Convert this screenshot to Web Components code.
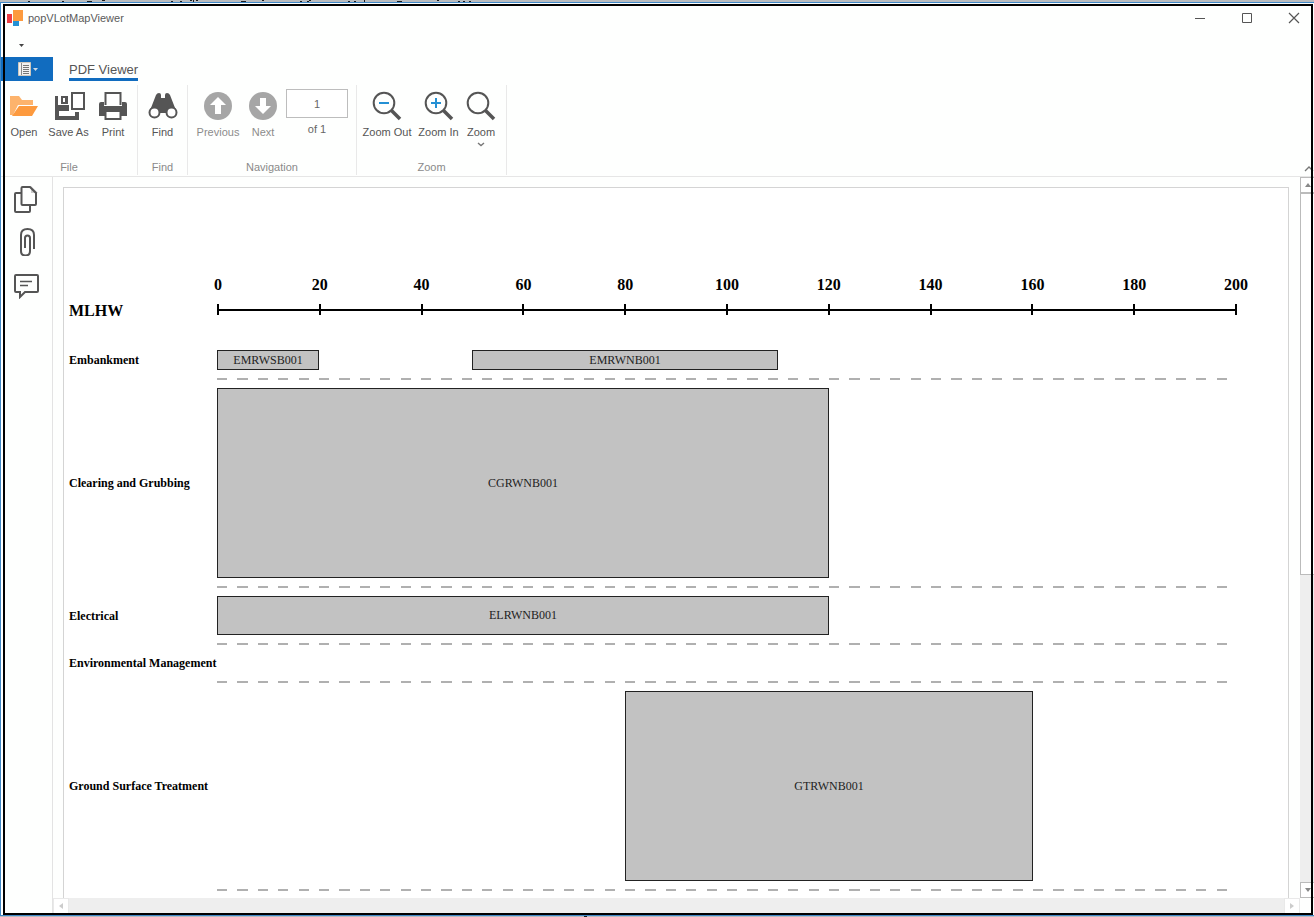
<!DOCTYPE html>
<html lang="en">
<head>
<meta charset="utf-8">
<title>popVLotMapViewer</title>
<style>
    html, body { height: 100%; margin: 0; }
    body {
        background: #b9bcbf;
        font-family: "Liberation Sans", Arial, sans-serif;
        font-size: 11px;
        color: #5a5a5a;
    }
</style>
</head>
<body>

<lot-window></lot-window>

<template id="t-window">
    <style>
        :host {
            display: flex; flex-direction: column;
            position: relative;
            height: 100vh; box-sizing: border-box;
            overflow: hidden;
        }
        /* sliver of the window underneath */
        .behind { flex: none; height: 2px; overflow: hidden; }
        .behind svg, .foot svg { display: block; }
        .shell {
            flex: 1; min-height: 0;
            display: flex; flex-direction: column;
            background: #fefffe;
            border: 1px solid #3f87c6; border-right: 0;
        }
        .foot { flex: none; height: 1px; background: #b9bcbf; display: flex; justify-content: center; }
        .foot svg { margin-right: 144px; }
        .main { flex: 1; min-height: 0; display: flex; }
        /* heavy outline lies over the whole window */
        .frame {
            position: absolute; inset: 4px 1px 2px 3px;
            border: 2px solid #000; pointer-events: none;
        }
    </style>
    <div class="behind">
        <svg width="480" height="2" stroke="#1c1c1c" fill="none">
            <path d="M28 1.500h2M62 1.500h2M87 1.500h5M171 1.500h2M180 1.500h2M241 1.500h5M300 1.500h2M307 1.500h2M348 1.500h2M354 1.500h2M397 1.500h5M458 1.500h2M463 1.500h2M469 1.500h2"/>
            <path d="M102 .5h3M190 .5h2M196 .5h2M262 .5h2M309 .5h2M437 .5h2M193.500 0v2M364.500 0v2"/>
        </svg>
    </div>
    <div class="shell">
        <title-bar>popVLotMapViewer</title-bar>
        <ribbon-tabs>PDF Viewer</ribbon-tabs>
        <tool-ribbon></tool-ribbon>
        <div class="main">
            <side-panel></side-panel>
            <doc-view><lot-map></lot-map></doc-view>
        </div>
    </div>
    <div class="foot"><svg width="3" height="1"><path d="M0 .5h3" stroke="#1c1c1c"/></svg></div>
    <div class="frame"></div>
</template>

<template id="t-title">
    <style>
        :host { display: block; flex: none; }
        .row { display: flex; align-items: center; height: 30px; padding: 0 12px 0 6px; }
        .logo { margin-right: 4px; }
        .name { flex: 1; line-height: 16px; }
        .quick { height: 24px; padding-left: 12px; display: flex; align-items: center; }
        .wins { display: flex; gap: 30px; }
        button { border: 0; padding: 0; background: none; display: flex; align-items: center; justify-content: center; width: 17px; height: 16px; color: #555; }
    </style>
    <div class="row">
        <svg class="logo" width="17" height="17" viewBox="0 0 17 17">
            <rect x="0" y="4" width="5" height="9" fill="#ee3d45"/>
            <rect x="6" y="0" width="10" height="11" fill="#fd9a3e"/>
            <rect x="6" y="11" width="6" height="5" fill="#2490d4"/>
        </svg>
        <span class="name"><slot></slot></span>
        <div class="wins">
            <button aria-label="Minimize"><svg width="12" height="12" stroke="currentColor"><path d="M1 6.500h10"/></svg></button>
            <button aria-label="Maximize"><svg width="12" height="12" fill="none" stroke="currentColor"><path d="M1.500 1.500h9v9h-9z"/></svg></button>
            <button aria-label="Close"><svg width="12" height="12" fill="none" stroke="currentColor" stroke-width="1.200"><path d="M1 1l10 10M11 1L1 11"/></svg></button>
        </div>
    </div>
    <div class="quick">
        <button aria-label="Customize quick access"><svg width="7" height="4"><path d="M1 1h5L3.500 4z" fill="#444"/></svg></button>
    </div>
</template>

<template id="t-tabs">
    <style>
        :host { display: flex; flex: none; height: 24px; }
        .app { border: 0; padding: 0 0 0 2px; width: 52px; background: #116cbf; display: flex; align-items: center; justify-content: center; gap: 2px; }
        .tab {
            margin-left: 16px; box-sizing: border-box;
            border: 0; border-bottom: 3px solid #116cbf; padding: 5px 0 0; background: none;
            font: inherit; font-size: 13px; line-height: 16px; color: #555;
        }
    </style>
    <button class="app" aria-label="Application menu">
        <svg width="13" height="14" viewBox="0 0 13 14">
            <path d="M.5.5h12v13H.5z" fill="#f2f2f2" stroke="#cfc8bd"/>
            <path d="M3.500 1v12" stroke="#8a8a8a"/>
            <path d="M5 3.500h6M5 5.500h6M5 7.500h6M5 9.500h6M5 11.500h6" stroke="#777"/>
        </svg>
        <svg width="5" height="3"><path d="M0 0h5L2.500 3z" fill="#cbd9e6"/></svg>
    </button>
    <button class="tab"><slot></slot></button>
</template>

<template id="t-group">
    <style>
        :host { display: flex; flex-direction: column; border-right: 1px solid #e9e9e9; box-sizing: border-box; margin: 4px 0 1px; }
        .items { flex: 1; display: flex; }
        .cap { text-align: center; line-height: 16px; color: #8a8a8a; }
    </style>
    <div class="items"><slot></slot></div>
    <div class="cap"></div>
</template>

<template id="t-tool">
    <style>
        :host { display: block; }
        button {
            display: flex; flex-direction: column; align-items: center;
            border: 0; margin: 0; padding: 6px 0 0; background: none;
            width: 100%; font: inherit; color: #555; white-space: nowrap;
        }
        .icon { height: 30px; width: 30px; margin-bottom: 3px; }
        .label { line-height: 16px; }
        :host([dim]) .label { color: #8c8c8c; }
        .drop { display: none; margin-top: 2px; }
        :host([drop]) .drop { display: block; }
    </style>
    <button>
        <span class="icon"></span>
        <span class="label"><slot></slot></span>
        <svg class="drop" width="8" height="5" fill="none" stroke="#777" stroke-width="1.400"><path d="M1 1l3 2.500L7 1"/></svg>
    </button>
</template>

<template id="t-ribbon">
    <style>
        :host { display: flex; flex: none; height: 95px; border-bottom: 1px solid #e6e6e6; }
        .file { width: 137px; }
        .find { width: 50px; }
        .nav { width: 169px; }
        .zoom { width: 150px; }
        .w36 { width: 36px; } .w40 { width: 40px; } .w49 { width: 49px; } .w54 { width: 54px; }
        .first { margin-left: 3px; }
        .page { display: flex; flex-direction: column; align-items: center; padding-top: 4px; margin-left: 5px; }
        input {
            width: 62px; height: 29px; box-sizing: border-box; margin: 0 0 3px;
            border: 1px solid #bdbdbd; background: #fff; text-align: center;
            font: inherit; color: #666;
        }
        .page label { line-height: 16px; color: #666; }
        .fold { margin: auto 0 8px auto; border: 0; padding: 0; background: none; display: block; height: 8px; }
    </style>
    <ribbon-group class="file" caption="File">
        <tool-button class="w40 first" icon="open">Open</tool-button>
        <tool-button class="w49" icon="save">Save As</tool-button>
        <tool-button class="w40" icon="print">Print</tool-button>
    </ribbon-group>
    <ribbon-group class="find" caption="Find">
        <tool-button class="w49" icon="find">Find</tool-button>
    </ribbon-group>
    <ribbon-group class="nav" caption="Navigation">
        <tool-button class="w54 first" icon="up" dim>Previous</tool-button>
        <tool-button class="w36" icon="down" dim>Next</tool-button>
        <div class="page"><input id="page" value="1"><label for="page">of 1</label></div>
    </ribbon-group>
    <ribbon-group class="zoom" caption="Zoom">
        <tool-button class="w54 first" icon="minus">Zoom Out</tool-button>
        <tool-button class="w49" icon="plus">Zoom In</tool-button>
        <tool-button class="w36" icon="lens" drop>Zoom</tool-button>
    </ribbon-group>
    <button class="fold" aria-label="Collapse ribbon"><svg width="10" height="6" fill="none" stroke="#777" stroke-width="1.300"><path d="M1 5l4-4 4 4"/></svg></button>
</template>

<template id="t-side">
    <style>
        :host { display: flex; flex-direction: column; align-items: center; flex: none; width: 51px; border-right: 1px solid #e3e3e3; padding-top: 8px; gap: 15px; }
        button { border: 0; padding: 0; background: none; width: 28px; height: 28px; }
        svg { display: block; fill: none; stroke: #555; stroke-width: 2; }
    </style>
    <button aria-label="Page thumbnails"><svg width="28" height="28" viewBox="0 0 28 28">
        <path d="M18 1v7h7z" fill="#ccc" stroke="none"/>
        <path d="M8.500 3q0-1 1-1H17l6 6v11q0 1-1 1H9.500q-1 0-1-1zM8 8H3q-1 0-1 1v17q0 1 1 1h13q1 0 1-1v-6"/>
    </svg></button>
    <button aria-label="Attachments"><svg width="28" height="28" viewBox="0 0 28 28">
        <path d="M12 20V10q0-2.500 2.500-2.500T17 10v13q0 4.500-4.500 4.500T8 23V7q0-6 6.500-6T21 7v14"/>
    </svg></button>
    <button aria-label="Comments"><svg width="28" height="28" viewBox="0 0 28 28">
        <path d="M3 4h21q1 0 1 1v15q0 1-1 1H12l-5 5v-5H3q-1 0-1-1V5q0-1 1-1z"/><path d="M7 10.500h12M7 14.500h8" stroke-width="1.600"/>
    </svg></button>
</template>

<template id="t-view">
    <style>
        :host { flex: 1; min-width: 0; display: flex; }
        .left { flex: 1; min-width: 0; display: flex; flex-direction: column; }
        .area { flex: 1; min-height: 0; overflow: hidden; padding: 10px 11px 0 10px; display: flex; }
        .paper { flex: 1; border: 1px solid #d4d4d4; border-bottom: 0; background: #fff; }
        .hbar { flex: none; height: 17px; background: #eee; display: flex; justify-content: space-between; }
        .vbar { flex: none; width: 14px; background: #eee; display: flex; flex-direction: column; margin-bottom: 17px; }
        button { flex: none; box-sizing: border-box; padding: 0; background: #fff; display: flex; align-items: center; justify-content: center; width: 16px; height: 16px; border: 1px solid #e9e9e9; }
        .vbar button { border-color: #bbb; }
        .thumb { height: 382px; width: 16px; box-sizing: border-box; background: #fff; border: 1px solid #bbb; }
        .vbar button:last-child { margin-top: auto; }
    </style>
    <div class="left">
        <div class="area"><div class="paper"><slot></slot></div></div>
        <div class="hbar">
            <button aria-label="Scroll left"><svg width="4" height="6"><path d="M4 0v6L0 3z" fill="#ccc"/></svg></button>
            <button aria-label="Scroll right"><svg width="4" height="6"><path d="M0 0v6l4-3z" fill="#ccc"/></svg></button>
        </div>
    </div>
    <div class="vbar">
        <button aria-label="Scroll up"><svg width="6" height="4"><path d="M0 4h6L3 0z" fill="#888"/></svg></button>
        <div class="thumb"></div>
        <button aria-label="Scroll down"><svg width="6" height="4"><path d="M0 0h6L3 4z" fill="#888"/></svg></button>
    </div>
</template>

<template id="t-map">
    <style>
        :host {
            display: block; padding: 87px 51px 0 5px;
            font-family: "Liberation Serif", "Times New Roman", serif;
            font-size: 12px; color: #000;
        }
        .row { display: grid; grid-template-columns: 148px 1fr; }
        .head { height: 67px; font-weight: bold; font-size: 16px; line-height: 20px; }
        .head .name { padding-top: 26px; }
        .scale { display: flex; flex-direction: column; }
        .nums, .ticks { display: flex; justify-content: space-between; }
        .nums { margin-bottom: 9px; }
        .nums span { width: 2px; display: flex; justify-content: center; }
        .ticks { height: 11px; background: linear-gradient(#000, #000) center / 100% 2px no-repeat; }
        .ticks i { width: 2px; background: #000; }
        .name { font-weight: bold; white-space: nowrap; }
        .lane .name { align-self: center; line-height: 16px; }
        .bars { display: flex; box-sizing: border-box; padding: 8px 0; }
        .dash {
            grid-column: 2; height: 2px;
            background: repeating-linear-gradient(90deg, #b0b0b0 0 1%, transparent 1% 2%);
        }
        .bar {
            box-sizing: border-box; flex: none;
            border: 1px solid #222; background: #c2c2c2; color: #222;
            display: flex; align-items: center; justify-content: center;
        }
    </style>
    <div class="row head">
        <div class="name">MLHW</div>
        <div class="scale"><div class="nums"></div><div class="ticks"></div></div>
    </div>
    <div class="lanes"></div>
</template>

<script>
const MAX = 200;
const LANES = [
    { name: 'Embankment', height: 20, lots: [['EMRWSB001', 0, 20], ['EMRWNB001', 50, 110]] },
    { name: 'Clearing and Grubbing', height: 190, lots: [['CGRWNB001', 0, 120]] },
    { name: 'Electrical', height: 39, lots: [['ELRWNB001', 0, 120]] },
    { name: 'Environmental Management', height: 20, lots: [] },
    { name: 'Ground Surface Treatment', height: 190, lots: [['GTRWNB001', 80, 160]] }
];

const lens = '<circle cx="12" cy="12" r="10.300" fill="none" stroke="#555" stroke-width="2"/><path d="M19.500 19.500l8.500 8.500" stroke="#555" stroke-width="3.500"/>';
const ICONS = {
    open: '<path d="M1 24V5h9l3 4h11v5H9L4 24z" fill="#fdb36c"/><path d="M10 15h19l-6 10H3z" fill="#fd9a3e"/>',
    save: '<path d="M1 5h14v15h10v9H1z" fill="#555"/><path d="M4 5h11v9H4zM5 20h16v5H5z" fill="#fff"/><path d="M7 5h7v8H7zM9 7v4h2V7z" fill="#555" fill-rule="evenodd"/><path d="M15 0h16v21H15z" fill="#fefffe"/><path d="M18 2h12v16H18z" fill="#fff" stroke="#555" stroke-width="2"/>',
    print: '<path d="M1 13q0-2 2-2h3v4h18v-4h3q2 0 2 2v12H1z" fill="#555"/><path d="M7.500 14V2h15v12M7.500 20h15v8h-15z" fill="#fff" stroke="#555" stroke-width="2"/>',
    find: '<path d="M8 4q1-2 3-2t2 2v3h4V4q0-2 2-2t3 2l7 18H1z" fill="#555"/><circle cx="6.500" cy="21.500" r="5" fill="#fff" stroke="#555" stroke-width="2"/><circle cx="23.500" cy="21.500" r="5" fill="#fff" stroke="#555" stroke-width="2"/><path d="M13 22h4v6h-4z" fill="#fefffe"/>',
    up: '<circle cx="15" cy="15" r="14" fill="#a6a6a6"/><path d="M15 6l8 8h-5v9h-6v-9H7z" fill="#fff"/>',
    down: '<circle cx="15" cy="15" r="14" fill="#a6a6a6"/><path d="M15 23l8-8h-5V7h-6v8H7z" fill="#fff"/>',
    minus: lens + '<path d="M7 12h10" stroke="#2490d4" stroke-width="2"/>',
    plus: lens + '<path d="M7 12h10M12 7v10" stroke="#2490d4" stroke-width="2"/>',
    lens: lens
};

function stamp(el, id) {
    const root = el.attachShadow({ mode: 'open' });
    root.appendChild(document.getElementById(id).content.cloneNode(true));
    return root;
}

function simple(tag, id) {
    customElements.define(tag, class extends HTMLElement {
        constructor() {
            super();
            stamp(this, id);
        }
    });
}

class ToolButton extends HTMLElement {
    constructor() {
        super();
        stamp(this, 't-tool');
    }
    connectedCallback() {
        this.shadowRoot.querySelector('.icon').innerHTML =
            '<svg width="30" height="30" viewBox="0 0 30 30" overflow="visible">' + ICONS[this.getAttribute('icon')] + '</svg>';
    }
}

class RibbonGroup extends HTMLElement {
    constructor() {
        super();
        stamp(this, 't-group');
    }
    connectedCallback() {
        this.shadowRoot.querySelector('.cap').textContent = this.getAttribute('caption');
    }
}

class LotMap extends HTMLElement {
    constructor() {
        super();
        stamp(this, 't-map');
    }
    connectedCallback() {
        const root = this.shadowRoot;
        for (let n = 0; n <= MAX; n += 20) {
            root.querySelector('.nums').insertAdjacentHTML('beforeend', `<span>${n}</span>`);
            root.querySelector('.ticks').insertAdjacentHTML('beforeend', '<i></i>');
        }
        // each bar is pushed right by the gap since the end of the one before
        root.querySelector('.lanes').innerHTML = LANES.map(lane => {
            let end = 0;
            const bars = lane.lots.map(([id, from, to]) => {
                const gap = (from - end) / MAX * 100;
                end = to;
                return `<div class="bar" style="margin-left:${gap}%;width:${(to - from) / MAX * 100}%">${id}</div>`;
            }).join('');
            return `<div class="row lane"><div class="name">${lane.name}</div>
                <div class="bars" style="height:${lane.height + 16}px">${bars}</div><div class="dash"></div></div>`;
        }).join('');
    }
}

simple('title-bar', 't-title');
simple('ribbon-tabs', 't-tabs');
simple('side-panel', 't-side');
simple('doc-view', 't-view');
customElements.define('tool-button', ToolButton);
customElements.define('ribbon-group', RibbonGroup);
customElements.define('lot-map', LotMap);
simple('tool-ribbon', 't-ribbon');
simple('lot-window', 't-window');
</script>
</body>
</html>
